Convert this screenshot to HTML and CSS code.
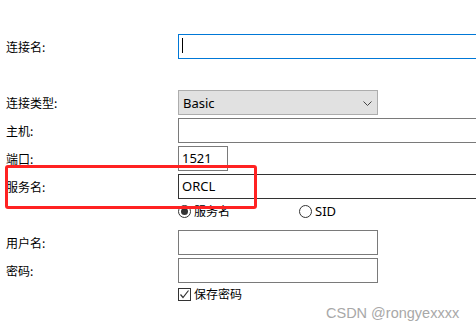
FILE: index.html
```html
<!DOCTYPE html>
<html lang="zh-CN">
<head>
    <meta charset="UTF-8">
    <title>连接设置</title>
    <link rel="stylesheet" href="styles.css">
</head>
<body>

    <div class="form">
        <!-- Connection name -->
        <div class="row row-first">
            <label class="label">连接名:</label>
            <div class="field field-wide field-focus"><span class="caret"></span></div>
        </div>

        <!-- Connection type -->
        <div class="row">
            <label class="label">连接类型:</label>
            <div class="select">
                <span>Basic</span>
                <svg class="chevron" width="9" height="5" viewBox="0 0 9 5">
                    <path d="M0.5 0.5 L4.5 4.5 L8.5 0.5" fill="none" stroke="#444" stroke-width="1"/>
                </svg>
            </div>
        </div>

        <div class="row">
            <label class="label">主机:</label>
            <div class="field field-wide"></div>
        </div>

        <div class="row">
            <label class="label">端口:</label>
            <div class="field field-port">1521</div>
        </div>

        <div class="row">
            <label class="label">服务名:</label>
            <div class="field field-wide field-dark">ORCL</div>
        </div>

        <!-- Service name / SID -->
        <div class="row row-radio">
            <span class="label"></span>
            <div class="option option-service">
                <span class="radio radio-on"></span>服务名
            </div>
            <div class="option">
                <span class="radio"></span>SID
            </div>
        </div>

        <div class="row">
            <label class="label">用户名:</label>
            <div class="field field-mid"></div>
        </div>

        <div class="row">
            <label class="label">密码:</label>
            <div class="field field-mid"></div>
        </div>

        <div class="row row-check">
            <span class="label"></span>
            <div class="option">
                <span class="checkbox">
                    <svg width="11" height="11" viewBox="0 0 11 11">
                        <path d="M1.5 5.5 L4 8.5 L9.5 1.5" fill="none" stroke="#333" stroke-width="1.2"/>
                    </svg>
                </span>保存密码
            </div>
        </div>
    </div>

    <!-- Highlight box drawn over the service name row -->
    <div class="highlight"></div>

    <div class="watermark">CSDN @rongyexxxx</div>

</body>
</html>
```

FILE: styles.css
```css
/* General Styles */
* {
    margin: 0;
    padding: 0;
    box-sizing: border-box;
}

body {
    width: 476px;
    height: 333px;
    overflow: hidden;
    position: relative;
    background-color: #fff;
    color: #000;
    font-family: "Noto Sans", "Noto Sans CJK SC", sans-serif;
    font-size: 12px;
}

/* Form Rows */
.form {
    padding: 34px 0 0 6px;
}

.row {
    display: flex;
    align-items: center;
    height: 25px;
    margin-bottom: 3px;
}

.row-first {
    margin-bottom: 31px;
}

.label {
    width: 172px;
    flex-shrink: 0;
    font-family: "Noto Sans CJK SC", sans-serif;
    font-size: 12px;
}

/* Text Fields */
.field {
    height: 25px;
    border: 1px solid #7a7a7a;
    background-color: #fff;
    padding-left: 3px;
    font-size: 13px;
    line-height: 23px;
    flex-shrink: 0;
}

.field-wide {
    flex: 1;
    border-right: none;
}

.field-mid {
    width: 200px;
}

.field-port {
    width: 50px;
}

.field-focus {
    border-color: #0078d7;
}

.field-dark {
    border-color: #333;
}

.caret {
    display: inline-block;
    width: 1px;
    height: 15px;
    margin-top: 3px;
    background-color: #000;
    vertical-align: top;
}

/* Dropdown */
.select {
    display: flex;
    align-items: center;
    justify-content: space-between;
    width: 200px;
    height: 25px;
    padding: 0 5px 0 4px;
    border: 1px solid #adadad;
    background-color: #e1e1e1;
    font-size: 13px;
}

.chevron {
    margin-top: 1px;
}

/* Radio and Checkbox */
.row-radio {
    align-items: flex-start;
    padding-top: 3px;
    margin-bottom: 3px;
}

.row-check {
    align-items: flex-start;
    padding-top: 2px;
}

.option {
    display: flex;
    align-items: center;
    font-family: "Noto Sans", "Noto Sans CJK SC", sans-serif;
    font-size: 13px;
    line-height: 13px;
}

.option-service {
    width: 121px;
    font-size: 12px;
}

.radio {
    width: 13px;
    height: 13px;
    margin-right: 3px;
    border: 1px solid #333;
    border-radius: 50%;
    position: relative;
}

.radio-on::after {
    content: "";
    position: absolute;
    left: 2px;
    top: 2px;
    width: 7px;
    height: 7px;
    border-radius: 50%;
    background-color: #333;
}

.checkbox {
    display: flex;
    align-items: center;
    justify-content: center;
    width: 13px;
    height: 13px;
    margin-right: 3px;
    border: 1px solid #333;
    background-color: #fff;
}

.row-check .option {
    font-size: 12px;
}

/* Overlays */
.highlight {
    position: absolute;
    left: 5px;
    top: 165px;
    width: 252px;
    height: 44px;
    border: 3px solid #ff2222;
    border-radius: 3px;
}

.watermark {
    position: absolute;
    left: 326px;
    top: 305px;
    font-family: "Liberation Sans", sans-serif;
    font-size: 14.5px;
    color: #a8a8a8;
}
```
